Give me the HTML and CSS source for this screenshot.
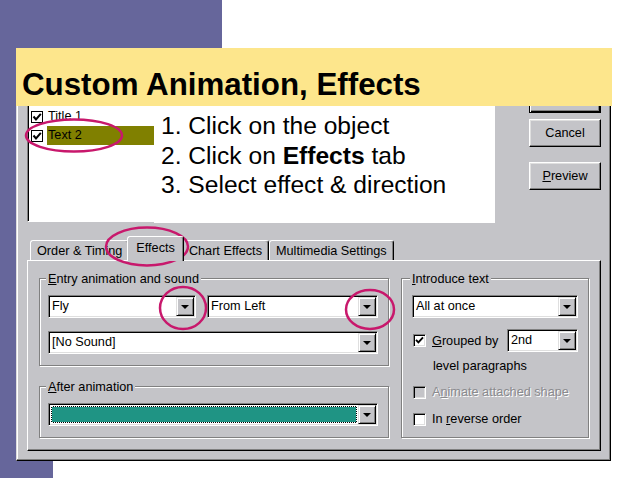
FILE: index.html
```html
<!DOCTYPE html>
<html lang="en">
<head>
<meta charset="utf-8">
<title>Custom Animation, Effects</title>
<link rel="stylesheet" href="styles.css">
</head>
<body>
<div class="slide">
  <div class="bg-purple-top"></div>
  <div class="bg-purple-left"></div>

  <div class="dialog">
    <div class="top-row">
      <div class="listbox">
        <div class="list-item">
          <span class="lb-check"><svg width="10" height="10" viewBox="0 0 10 10"><polyline points="1.5,4.5 4,7.5 8.8,1.8" fill="none" stroke="#000" stroke-width="2"/></svg></span>
          <span class="lb-text">Title 1</span>
        </div>
        <div class="list-item">
          <span class="lb-check"><svg width="10" height="10" viewBox="0 0 10 10"><polyline points="1.5,4.5 4,7.5 8.8,1.8" fill="none" stroke="#000" stroke-width="2"/></svg></span>
          <span class="lb-text lb-selected">Text 2</span>
        </div>
      </div>
      <div class="btn-col">
        <div class="btn btn-default">OK</div>
        <div class="btn">Cancel</div>
        <div class="btn btn-sep"><span><u>P</u>review</span></div>
      </div>
    </div>

    <div class="tabs">
      <div class="tab">Order &amp; Timing</div>
      <div class="tab tab-active">Effects</div>
      <div class="tab">Chart Effects</div>
      <div class="tab">Multimedia Settings</div>
    </div>

    <div class="panel">
      <div class="col-left">
        <div class="group group-entry">
          <div class="group-label"><u>E</u>ntry animation and sound</div>
          <div class="combo-row">
            <div class="combo combo-fly"><span class="combo-text">Fly</span><span class="drop"></span></div>
            <div class="combo combo-dir"><span class="combo-text">From Left</span><span class="drop"></span></div>
          </div>
          <div class="combo combo-sound"><span class="combo-text">[No Sound]</span><span class="drop"></span></div>
        </div>
        <div class="group group-after">
          <div class="group-label"><u>A</u>fter animation</div>
          <div class="combo combo-color"><span class="swatch"></span><span class="drop"></span></div>
        </div>
      </div>

      <div class="group group-intro">
        <div class="group-label"><u>I</u>ntroduce text</div>
        <div class="combo"><span class="combo-text">All at once</span><span class="drop"></span></div>
        <div class="check-row row-grouped">
          <span class="cb"><svg width="9" height="9" viewBox="0 0 9 9"><polyline points="1,3.8 3.4,6.3 8,1.4" fill="none" stroke="#000" stroke-width="1.9"/></svg></span>
          <span class="cb-label"><u>G</u>rouped by</span>
          <div class="combo combo-level"><span class="combo-text">2nd</span><span class="drop"></span></div>
        </div>
        <div class="level-text">level paragraphs</div>
        <div class="check-row row-animate">
          <span class="cb cb-disabled"></span>
          <span class="cb-label disabled">A<u>n</u>imate attached shape</span>
        </div>
        <div class="check-row row-reverse">
          <span class="cb"></span>
          <span class="cb-label">In <u>r</u>everse order</span>
        </div>
      </div>
    </div>
  </div>

  <div class="banner">Custom Animation, Effects</div>

  <div class="note">
    <div>1. Click on the object</div>
    <div>2. Click on <b>Effects</b> tab</div>
    <div>3. Select effect &amp; direction</div>
  </div>

  <svg class="marks" width="638" height="478" viewBox="0 0 638 478">
    <ellipse cx="74" cy="135.5" rx="48" ry="16"/>
    <ellipse cx="147" cy="246.5" rx="41" ry="19"/>
    <ellipse cx="183" cy="308" rx="23" ry="21"/>
    <ellipse cx="370" cy="309.5" rx="24" ry="19.5"/>
  </svg>
</div>
</body>
</html>
```
FILE: styles.css
```css
* { box-sizing: border-box; }

html, body {
  margin: 0;
  padding: 0;
}

body {
  background: #fff;
  font-family: "Liberation Sans", Arial, sans-serif;
}

.slide {
  position: relative;
  width: 638px;
  height: 478px;
  overflow: hidden;
  background: #fff;
}

/* slide background art */
.bg-purple-top {
  position: absolute;
  left: 0;
  top: 0;
  width: 222px;
  height: 120px;
  background: #66669b;
}

.bg-purple-left {
  position: absolute;
  left: 0;
  top: 0;
  width: 53px;
  height: 478px;
  background: #66669b;
}

/* the dialog screenshot placed on the slide */
.dialog {
  position: absolute;
  left: 16px;
  top: 48px;
  width: 595px;
  background: #c4c4c8;
  border: 1px solid;
  border-color: #dcdcdc #000 #000 #dcdcdc;
  box-shadow: inset -1px -1px 0 #808080, inset 1px 1px 0 #fff;
  padding: 36px 9px 9px 10px;
  font-size: 12.7px;
  color: #000;
}

.top-row {
  display: flex;
  justify-content: space-between;
  height: 137px;
}

.listbox {
  margin-top: 19px;
  width: 453px;
  height: 118px;
  background: #fff;
  border: 1px solid;
  border-color: #808080 #fff #fff #808080;
  box-shadow: inset 1px 1px 0 #000;
  padding: 2px 0 0 3px;
}

.list-item {
  display: flex;
  align-items: center;
  height: 19px;
}

.lb-check {
  width: 12px;
  height: 12px;
  border: 1px solid #000;
  background: #fff;
  display: flex;
  align-items: center;
  justify-content: center;
  margin-right: 4px;
  flex: none;
}

.lb-text {
  padding-left: 1px;
  line-height: 19px;
}

.lb-selected {
  background: #808000;
  width: 130px;
}

.btn-col {
  display: flex;
  flex-direction: column;
  width: 72px;
}

.btn {
  height: 28px;
  border: 1px solid;
  border-color: #fff #000 #000 #fff;
  box-shadow: inset -1px -1px 0 #808080, inset 1px 1px 0 #dfdfdf;
  display: flex;
  align-items: center;
  justify-content: center;
  background: #c4c4c8;
}

.btn + .btn { margin-top: 6px; }
.btn.btn-sep { margin-top: 15px; }

.btn-default {
  border-color: #000;
  box-shadow: inset 1px 1px 0 #fff, inset -1px -1px 0 #000, inset -2px -2px 0 #808080;
}

/* tabs */
.tabs {
  display: flex;
  align-items: flex-end;
  margin-top: 14px;
  margin-bottom: -1px;
  padding-left: 3px;
  height: 25px;
}

.tab {
  height: 20px;
  margin-bottom: 1px;
  padding: 2px 6px 0;
  line-height: 16px;
  background: #c4c4c8;
  border: 1px solid;
  border-bottom: none;
  border-color: #fff #000 transparent #fff;
  box-shadow: inset -1px 0 0 #808080;
  border-radius: 3px 3px 0 0;
  white-space: nowrap;
}

.tab-active {
  height: 25px;
  margin: 0 -2px;
  padding: 3px 8px 0;
  position: relative;
  z-index: 1;
}

.panel {
  border: 1px solid;
  border-color: #fff #000 #000 #fff;
  box-shadow: inset -1px -1px 0 #808080;
  height: 191px;
  padding: 17px 11px 0;
  display: flex;
  gap: 12px;
  align-items: flex-start;
}

.col-left {
  width: 350px;
  display: flex;
  flex-direction: column;
  gap: 20px;
}

.group {
  border: 1px solid #808080;
  box-shadow: inset 1px 1px 0 #fff, 1px 1px 0 #fff;
  padding: 0 10px 11px 8px;
}

.group-label {
  width: fit-content;
  margin: -8px 0 0 -2px;
  padding: 0 2px;
  background: #c4c4c8;
  line-height: 16px;
  white-space: nowrap;
}

.combo-row {
  display: flex;
  gap: 11px;
  margin-top: 8px;
}

.combo {
  height: 23px;
  background: #fff;
  border: 1px solid;
  border-color: #808080 #fff #fff #808080;
  box-shadow: inset 1px 1px 0 #000, inset -1px -1px 0 #dfdfdf;
  padding: 1px;
  display: flex;
  align-items: stretch;
}

.combo-text {
  flex: 1;
  padding-left: 2px;
  line-height: 19px;
  white-space: nowrap;
  overflow: hidden;
}

.drop {
  width: 18px;
  flex: none;
  background: #c4c4c8;
  border: 1px solid;
  border-color: #dfdfdf #000 #000 #dfdfdf;
  box-shadow: inset 1px 1px 0 #fff, inset -1px -1px 0 #808080;
  display: flex;
  align-items: center;
  justify-content: center;
}

.drop::after {
  content: "";
  border-left: 4px solid transparent;
  border-right: 4px solid transparent;
  border-top: 4px solid #000;
}

.combo-fly { width: 148px; flex: none; }
.combo-dir { flex: 1; }
.combo-sound { margin-top: 13px; }
.combo-color { margin-top: 8px; }

.swatch {
  flex: 1;
  margin: 1px;
  border: 1px dotted #fff;
  background: linear-gradient(#1f9484, #1f9484) padding-box, #000 border-box;
}

.group-intro {
  width: 188px;
  padding: 0 10px 10px 10px;
}

.group-intro > .combo { margin-top: 8px; }

.check-row {
  display: flex;
  align-items: center;
}

.row-grouped { margin-top: 11px; height: 23px; }
.row-animate { margin-top: 10px; height: 16px; }
.row-reverse { margin-top: 11px; height: 16px; }

.cb {
  width: 13px;
  height: 13px;
  flex: none;
  margin-left: 1px;
  background: #fff;
  border: 1px solid;
  border-color: #808080 #fff #fff #808080;
  box-shadow: inset 1px 1px 0 #000, inset -1px -1px 0 #dfdfdf;
  display: flex;
  align-items: center;
  justify-content: center;
}

.cb-disabled { background: #c4c4c8; }

.cb-label {
  margin-left: 6px;
  line-height: 16px;
  white-space: nowrap;
}

.cb-label.disabled {
  color: #8a8a8e;
  text-shadow: 1px 1px 0 #fff;
}

.combo-level {
  width: 71px;
  margin-left: auto;
}

.level-text {
  margin-top: 6px;
  padding-left: 21px;
  line-height: 16px;
}

/* slide overlays */
.banner {
  position: absolute;
  left: 16px;
  top: 48px;
  width: 596px;
  height: 58px;
  background: #fde68c;
  padding: 20px 0 0 6px;
  font-family: "Liberation Sans", Arial, sans-serif;
  font-weight: bold;
  font-size: 31.3px;
  line-height: 34px;
  color: #000;
  white-space: nowrap;
}

.note {
  position: absolute;
  left: 154px;
  top: 106px;
  width: 341px;
  height: 117px;
  background: #fff;
  padding: 5px 0 0 7px;
  font-family: "Liberation Sans", Arial, sans-serif;
  font-size: 24.6px;
  line-height: 29.5px;
  color: #000;
  white-space: nowrap;
}

.marks {
  position: absolute;
  left: 0;
  top: 0;
  pointer-events: none;
  fill: none;
  stroke: #c8186c;
  stroke-width: 2.5;
}
```
